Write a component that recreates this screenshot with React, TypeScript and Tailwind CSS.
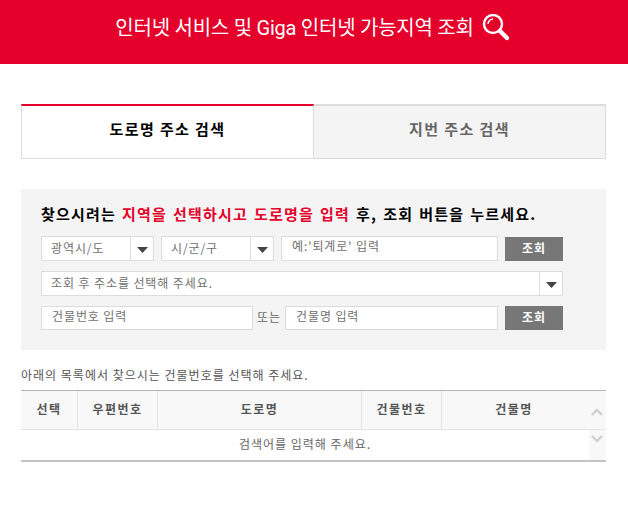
const kr = "font-['Noto_Sans_CJK_KR','Noto_Sans_CJK_SC',sans-serif]";

function Caret() {
  return (
    <svg width="11" height="6" viewBox="0 0 11 6" className="block">
      <path d="M0 0H11L5.5 6Z" fill="#444444" />
    </svg>
  );
}

function Select({ label, className }: { label: string; className: string }) {
  return (
    <div className={`flex border border-[#dcdcdc] bg-white ${className}`}>
      <div className="flex-1 pl-[9px] text-[12px] leading-[22px] tracking-[0.9px] text-[#707070]">{label}</div>
      <div className="flex w-[23px] items-center justify-center border-l border-[#dcdcdc] pt-[2px]">
        <Caret />
      </div>
    </div>
  );
}

function Field({ label, className }: { label: string; className: string }) {
  return (
    <div className={`border border-[#dcdcdc] bg-white pl-[10px] text-[12px] leading-[17px] tracking-[0.9px] text-[#707070] ${className}`}>
      {label}
    </div>
  );
}

function Button({ className }: { className: string }) {
  return (
    <div className={`flex w-[58px] items-center justify-center bg-[#777777] pb-[2px] text-[12px] font-bold tracking-[1px] text-white ${className}`}>
      조회
    </div>
  );
}

const cols = [
  { label: "선택", w: "w-[57px]" },
  { label: "우편번호", w: "w-[80px]" },
  { label: "도로명", w: "w-[204px]" },
  { label: "건물번호", w: "w-[80px]" },
];

export default function App() {
  return (
    <div className={`h-[515px] w-[628px] overflow-hidden bg-white ${kr}`}>
      <header className="flex h-[64px] items-center justify-center gap-[8px] bg-[#e4002b] pr-[3px] pb-[8px]">
        <h1 className="font-['Roboto','Noto_Sans_CJK_KR',sans-serif] text-[20px] leading-[28px] font-normal tracking-[-0.25px] text-white">
          인터넷 서비스 및 Giga 인터넷 가능지역 조회
        </h1>
        <svg width="28" height="28" viewBox="0 0 28 28" className="mb-[2px]">
          <circle cx="11" cy="11" r="9" fill="none" stroke="white" strokeWidth="2.4" />
          <path d="M6 11a5 5 0 0 1 5-5" fill="none" stroke="white" strokeWidth="1.4" />
          <path d="M18 18L25 25" stroke="white" strokeWidth="4.2" strokeLinecap="round" />
        </svg>
      </header>

      <main className="mx-[21px] mt-[40px] w-[585px]">
        <div className="flex h-[55px]">
          <div className="flex w-[293px] items-center justify-center border-x border-b border-t-2 border-[#dcdcdc] border-t-[#e4002b] pb-[6px] text-[15px] font-bold tracking-[1.4px] text-black">
            도로명 주소 검색
          </div>
          <div className="flex flex-1 items-center justify-center border-y border-r border-t-2 border-[#dcdcdc] bg-[#f4f4f4] pb-[6px] text-[15px] font-bold tracking-[1.4px] text-[#666666]">
            지번 주소 검색
          </div>
        </div>

        <section className="mt-[30px] flex h-[161px] flex-col bg-[#f4f4f4] pt-[15px] pr-[43px] pl-[20px]">
          <p className="text-[15px] leading-[20px] font-bold tracking-[1.2px] [word-spacing:1.4px] text-black">
            찾으시려는 <span className="text-[#e4002b]">지역을 선택하시고 도로명을 입력</span> 후, 조회 버튼을 누르세요.
          </p>
          <div className="mt-[12px] flex h-[25px]">
            <Select label="광역시/도" className="w-[113px]" />
            <Select label="시/군/구" className="ml-[7px] w-[113px]" />
            <Field label="예:'퇴계로' 입력" className="ml-[7px] w-[217px]" />
            <Button className="mt-[1px] ml-[7px]" />
          </div>
          <Select label="조회 후 주소를 선택해 주세요." className="mt-[10px] h-[25px]" />
          <div className="mt-[10px] flex h-[24px]">
            <Field label="건물번호 입력" className="w-[212px]" />
            <span className="w-[32px] pt-[2px] text-center text-[12px] leading-[18px] tracking-[0.9px] text-[#666666]">또는</span>
            <Field label="건물명 입력" className="w-[213px]" />
            <Button className="ml-[7px]" />
          </div>
        </section>

        <p className="mt-[16px] text-[12px] leading-[18px] tracking-[1px] text-[#555555]">
          아래의 목록에서 찾으시는 건물번호를 선택해 주세요.
        </p>

        <div className="relative mt-[6px] border-t border-b-2 border-t-[#b4b4b4] border-b-[#c4c4c4] bg-[#f8f8f8]">
          <div className="flex h-[39px] border-b border-[#e4e4e4]">
            {cols.map((c) => (
              <div key={c.label} className={`flex ${c.w} items-center justify-center border-r border-[#e4e4e4] pb-[3px] text-[12px] font-bold tracking-[1.5px] text-[#555555]`}>
                {c.label}
              </div>
            ))}
            <div className="flex flex-1 items-center justify-center pr-[20px] pb-[3px] text-[12px] font-bold tracking-[1.5px] text-[#555555]">
              건물명
            </div>
          </div>
          <div className="mr-[17px] flex h-[30px] items-center justify-center bg-white pb-[3px] text-[12px] tracking-[1px] text-[#666666]">
            검색어를 입력해 주세요.
          </div>
          <div className="absolute top-[17px] right-[3px] flex flex-col gap-[19px]">
            <svg width="12" height="8" viewBox="0 0 12 8" className="block">
              <path d="M1 7L6 2L11 7" fill="none" stroke="#d0d0d0" strokeWidth="2.4" />
            </svg>
            <svg width="12" height="8" viewBox="0 0 12 8" className="block">
              <path d="M1 1L6 6L11 1" fill="none" stroke="#d0d0d0" strokeWidth="2.4" />
            </svg>
          </div>
        </div>
      </main>
    </div>
  );
}
